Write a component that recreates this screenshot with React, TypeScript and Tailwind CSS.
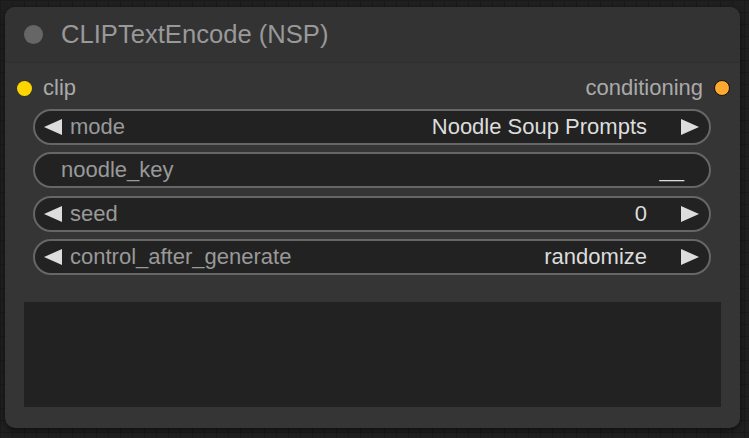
const font = { fontFamily: '"Liberation Sans", Arial, sans-serif' };

const LeftArrow = () => (
  <svg width="18" height="16" viewBox="0 0 18 16" className="shrink-0">
    <polygon points="18,0 0,8 18,16" fill="#dddddd" />
  </svg>
);

const RightArrow = () => (
  <svg width="18" height="16" viewBox="0 0 18 16" className="shrink-0">
    <polygon points="0,0 18,8 0,16" fill="#dddddd" />
  </svg>
);

const ComboWidget = ({ label, value }: { label: string; value: string }) => (
  <div className="flex h-[36px] items-center rounded-full border-2 border-[#666] bg-[#222] pl-[9px] pr-[10px] text-[22px] leading-none">
    <LeftArrow />
    <span className="ml-[8px] text-[#999]">{label}</span>
    <span className="ml-auto text-[#ddd]">{value}</span>
    <span className="ml-[34px]">
      <RightArrow />
    </span>
  </div>
);

const TextWidget = ({ label, value }: { label: string; value: string }) => (
  <div className="flex h-[36px] items-center rounded-full border-2 border-[#666] bg-[#222] pl-[26px] pr-[25px] text-[22px] leading-none">
    <span className="text-[#999]">{label}</span>
    <span className="ml-auto text-[#ddd]">{value}</span>
  </div>
);

export default function App() {
  return (
    <div
      className="h-[438px] w-[749px] overflow-hidden bg-[#202020] bg-[linear-gradient(#1a1a1a_1px,transparent_1px),linear-gradient(90deg,#1a1a1a_1px,transparent_1px)] bg-[size:12px_12px] pl-[5px] pt-[7px]"
      style={font}
    >
      <div className="flex h-[421px] w-[735px] flex-col rounded-[10px] bg-[#353535] shadow-[0_2px_6px_rgba(0,0,0,0.6)]">
        {/* TITLE */}
        <div className="flex h-[56px] shrink-0 items-center rounded-t-[10px] border-b border-[#2e2e2e] bg-[#333] pl-[19px]">
          <div className="h-[19px] w-[19px] rounded-full bg-[#666]" />
          <span className="ml-[18px] text-[25.6px] text-[#999]">CLIPTextEncode (NSP)</span>
        </div>

        {/* SLOTS */}
        <div className="flex h-[46px] shrink-0 items-start justify-between pl-[12px] pr-[10px] pt-[14px]">
          <div className="flex h-[22px] items-center">
            <div className="h-[15px] w-[15px] rounded-full bg-[#ffd500]" />
            <span className="ml-[11px] text-[22px] leading-none text-[#aaa]">clip</span>
          </div>
          <div className="flex h-[22px] items-center">
            <span className="mr-[11px] text-[22px] leading-none text-[#aaa]">conditioning</span>
            <div className="h-[16px] w-[16px] rounded-full border-[1.5px] border-[#111] bg-[#ffa931]" />
          </div>
        </div>

        {/* WIDGETS */}
        <div className="ml-[28px] mr-[29px] flex flex-col gap-[7.3px]">
          <ComboWidget label="mode" value="Noodle Soup Prompts" />
          <TextWidget label="noodle_key" value="__" />
          <ComboWidget label="seed" value="0" />
          <ComboWidget label="control_after_generate" value="randomize" />
        </div>

        {/* TEXT AREA */}
        <div className="mx-[19px] mt-[27px] h-[105px] bg-[#222]" />
      </div>
    </div>
  );
}
